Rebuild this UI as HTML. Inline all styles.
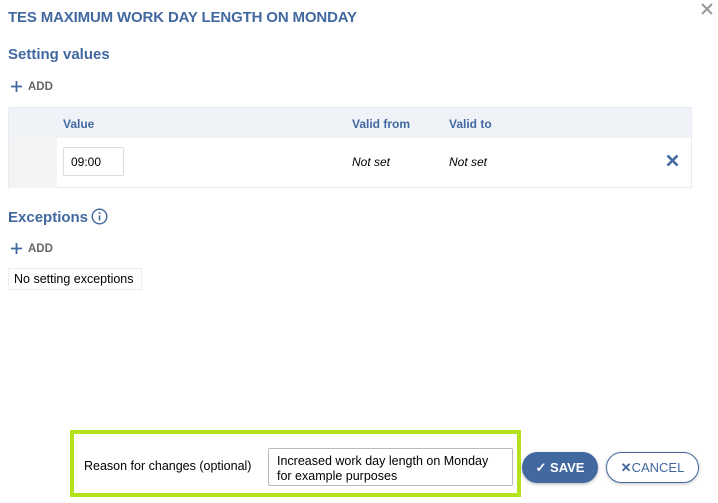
<!DOCTYPE html>
<html><head><style>
body{margin:0;width:718px;height:503px;background:#fff;font-family:"Liberation Sans",sans-serif;position:relative;overflow:hidden}
.a{position:absolute;white-space:nowrap}
.blue{color:#4268a0}
</style></head><body>
<div class="a blue" style="left:8px;top:9px;font-size:15px;font-weight:bold;letter-spacing:-0.15px">TES MAXIMUM WORK DAY LENGTH ON MONDAY</div>
<svg class="a" style="left:701px;top:3px" width="12" height="12"><path d="M1 1L11 11M11 1L1 11" stroke="#999" stroke-width="2"/></svg>
<div class="a blue" style="left:8px;top:46px;font-size:15px;font-weight:bold">Setting values</div>
<svg class="a" style="left:11px;top:81px" width="11" height="11"><path d="M5.5 0V11M0 5.5H11" stroke="#4268a0" stroke-width="1.8"/></svg>
<div class="a" style="left:28px;top:81px;font-size:11.5px;font-weight:bold;color:#666">ADD</div>
<div class="a" style="left:8px;top:107px;width:684px;height:81px;border:1px solid #e8ecf2;box-sizing:border-box">
<div class="a" style="left:0;top:0;width:682px;height:30px;background:#eff3f8"></div>
<div class="a" style="left:0;top:30px;width:48px;height:50px;background:#f4f4f4"></div>
<div class="a blue" style="left:54px;top:9px;font-size:12px;font-weight:bold">Value</div>
<div class="a blue" style="left:343px;top:9px;font-size:12px;font-weight:bold">Valid from</div>
<div class="a blue" style="left:440px;top:9px;font-size:12px;font-weight:bold">Valid to</div>
<div class="a" style="left:54px;top:39px;width:61px;height:29px;border:1px solid #ddd;border-radius:2px;box-sizing:border-box;font-size:12px;padding:7px 0 0 7px">09:00</div>
<div class="a" style="left:343px;top:47px;font-size:12px;font-style:italic">Not set</div>
<div class="a" style="left:440px;top:47px;font-size:12px;font-style:italic">Not set</div>
<svg class="a" style="left:657px;top:46px" width="13" height="13"><path d="M1.5 1.5L11.5 11.5M11.5 1.5L1.5 11.5" stroke="#4268a0" stroke-width="2.6"/></svg>
</div>
<div class="a blue" style="left:8px;top:209px;font-size:15px;font-weight:bold">Exceptions</div>
<svg class="a" style="left:91px;top:208px" width="17" height="17"><circle cx="8.5" cy="8.5" r="7.3" fill="none" stroke="#4268a0" stroke-width="1.4"/><circle cx="8.5" cy="5" r="1" fill="#4268a0"/><path d="M8.5 7.5V12.5" stroke="#4268a0" stroke-width="1.6"/></svg>
<svg class="a" style="left:11px;top:243px" width="11" height="11"><path d="M5.5 0V11M0 5.5H11" stroke="#4268a0" stroke-width="1.8"/></svg>
<div class="a" style="left:28px;top:243px;font-size:11.5px;font-weight:bold;color:#666">ADD</div>
<div class="a" style="left:8px;top:268px;width:134px;height:22px;border:1px solid #eee;box-sizing:border-box;font-size:12.5px;padding:3px 0 0 5px">No setting exceptions</div>
<div class="a" style="left:70px;top:430px;width:451px;height:67px;border:4px solid #b5e21d;box-sizing:border-box"></div>
<div class="a" style="left:84px;top:459px;font-size:12.5px">Reason for changes (optional)</div>
<div class="a" style="left:268px;top:448px;width:245px;height:38px;border:1px solid #bbb;border-radius:2px;box-sizing:border-box;font-size:12.5px;line-height:15px;padding:5px 0 0 8px">Increased work day length on Monday<br>for example purposes</div>
<div class="a" style="left:522px;top:452px;width:76px;height:31px;background:#4268a0;border-radius:16px;color:#fff;font-size:13px;font-weight:bold;line-height:31px;text-align:center;box-shadow:0 1px 3px rgba(0,0,0,.3)">✓ SAVE</div>
<div class="a" style="left:606px;top:452px;width:93px;height:31px;border:1px solid #4268a0;border-radius:16px;box-sizing:border-box;color:#4268a0;font-size:13px;line-height:29px;text-align:center;box-shadow:0 1px 3px rgba(0,0,0,.25)"><b>✕</b>CANCEL</div>
</body></html>
